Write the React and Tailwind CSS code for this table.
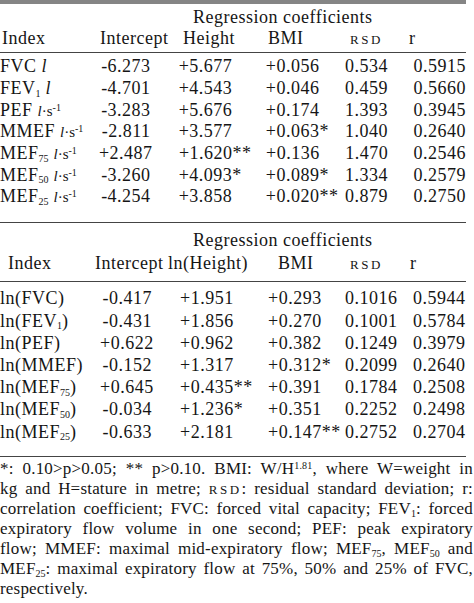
import React from 'react';

const table1 = [
  { name: <>FVC <i>l</i></>, a: '-6.273', b: '+5.677', c: '+0.056', d: '0.534', r: '0.5915' },
  { name: <>FEV<Sub>1</Sub> <i>l</i></>, a: '-4.701', b: '+4.543', c: '+0.046', d: '0.459', r: '0.5660' },
  { name: <>PEF <Ls /></>, a: '-3.283', b: '+5.676', c: '+0.174', d: '1.393', r: '0.3945' },
  { name: <>MMEF <Ls /></>, a: '-2.811', b: '+3.577', c: '+0.063*', d: '1.040', r: '0.2640' },
  { name: <>MEF<Sub>75</Sub> <Ls /></>, a: '+2.487', b: '+1.620**', c: '+0.136', d: '1.470', r: '0.2546' },
  { name: <>MEF<Sub>50</Sub> <Ls /></>, a: '-3.260', b: '+4.093*', c: '+0.089*', d: '1.334', r: '0.2579' },
  { name: <>MEF<Sub>25</Sub> <Ls /></>, a: '-4.254', b: '+3.858', c: '+0.020**', d: '0.879', r: '0.2750' },
];

const table2 = [
  { name: 'ln(FVC)', a: '-0.417', b: '+1.951', c: '+0.293', d: '0.1016', r: '0.5944' },
  { name: <>ln(FEV<Sub>1</Sub>)</>, a: '-0.431', b: '+1.856', c: '+0.270', d: '0.1001', r: '0.5784' },
  { name: 'ln(PEF)', a: '+0.622', b: '+0.962', c: '+0.382', d: '0.1249', r: '0.3979' },
  { name: 'ln(MMEF)', a: '-0.152', b: '+1.317', c: '+0.312*', d: '0.2099', r: '0.2640' },
  { name: <>ln(MEF<Sub>75</Sub>)</>, a: '+0.645', b: '+0.435**', c: '+0.391', d: '0.1784', r: '0.2508' },
  { name: <>ln(MEF<Sub>50</Sub>)</>, a: '-0.034', b: '+1.236*', c: '+0.351', d: '0.2252', r: '0.2498' },
  { name: <>ln(MEF<Sub>25</Sub>)</>, a: '-0.633', b: '+2.181', c: '+0.147**', d: '0.2752', r: '0.2704' },
];

function Sub({ children }) {
  return <sub className="text-[10px] tracking-normal">{children}</sub>;
}

function Ls() {
  return (
    <span className="text-[15px] tracking-normal">
      <i>l</i>·s<sup className="text-[10px]">-1</sup>
    </span>
  );
}

function Rsd() {
  return <span className="text-[13px] tracking-[2.5px]">RSD</span>;
}

function DataRow({ row, second }) {
  return (
    <div className={second ? 'flex h-[22.2px] items-center whitespace-nowrap' : 'flex h-[21.7px] items-center whitespace-nowrap'}>
      <div className="w-[100px]">{row.name}</div>
      <div className="w-[52px] text-right">{row.a}</div>
      <div className="w-[88px] pl-[28px] box-content">{row.b}</div>
      <div className="w-[80px]">{row.c}</div>
      <div className={second ? 'w-[67px] -ml-[3px]' : 'w-[69px]'}>{row.d}</div>
      <div className={second ? 'pl-[1px]' : ''}>{row.r}</div>
    </div>
  );
}

const lines = [
  <>*: 0.10&gt;p&gt;0.05; ** p&gt;0.10. BMI: W/H<sup className="text-[10px]">1.81</sup>, where W=weight in</>,
  <>kg and H=stature in metre; <Rsd />: residual standard deviation; r:</>,
  <>correlation coefficient; FVC: forced vital capacity; FEV<Sub>1</Sub>: forced</>,
  <>expiratory flow volume in one second; PEF: peak expiratory</>,
  <>flow; MMEF: maximal mid-expiratory flow; MEF<Sub>75</Sub>, MEF<Sub>50</Sub> and</>,
  <>MEF<Sub>25</Sub>: maximal expiratory flow at 75%, 50% and 25% of FVC,</>,
];

export default function App() {
  return (
    <div
      className="w-[474px] h-[603px] overflow-hidden bg-white text-[#151515] text-[18px] tracking-[0.5px]"
      style={{ fontFamily: '"Liberation Serif", "Times New Roman", serif' }}
    >
      <div className="w-[466px]">
        <div className="h-[4px] bg-[#858585]" />
        <div className="h-[22px] leading-[22px] pl-[193px] pt-[2px]">Regression coefficients</div>
        <div className="flex h-[24px] items-center whitespace-nowrap">
          <div className="w-[100px] pl-[2px]">Index</div>
          <div className="w-[83px]">Intercept</div>
          <div className="w-[85px]">Height</div>
          <div className="w-[82px]">BMI</div>
          <div className="w-[58px]"><Rsd /></div>
          <div className="pl-[1px]">r</div>
        </div>
        <div className="h-px bg-[#444] mt-[2px] mb-[3px]" />
        {table1.map((row, i) => (
          <DataRow key={i} row={row} />
        ))}
        <div className="h-px bg-[#444] mt-[14px]" />
        <div className="h-[24px] leading-[24px] pl-[193px] mt-[5px]">Regression coefficients</div>
        <div className="flex h-[24px] items-center whitespace-nowrap">
          <div className="w-[95px] pl-[8px]">Index</div>
          <div className="w-[73px]">Intercept</div>
          <div className="w-[110px]">ln(Height)</div>
          <div className="w-[72px]">BMI</div>
          <div className="w-[60px]"><Rsd /></div>
          <div>r</div>
        </div>
        <div className="h-px bg-[#444] mt-[5px] mb-[6px]" />
        {table2.map((row, i) => (
          <DataRow key={i} row={row} second />
        ))}
        <div className="h-px bg-[#444] mt-[13px]" />
      </div>
      <div className="w-[473px] text-[17px] tracking-[0.2px] leading-[20px] mt-[2px]">
        {lines.map((line, i) => (
          <div key={i} className="whitespace-nowrap text-justify [text-align-last:justify] h-[20px]">
            {line}
          </div>
        ))}
        <div className="h-[20px]">respectively.</div>
      </div>
    </div>
  );
}
